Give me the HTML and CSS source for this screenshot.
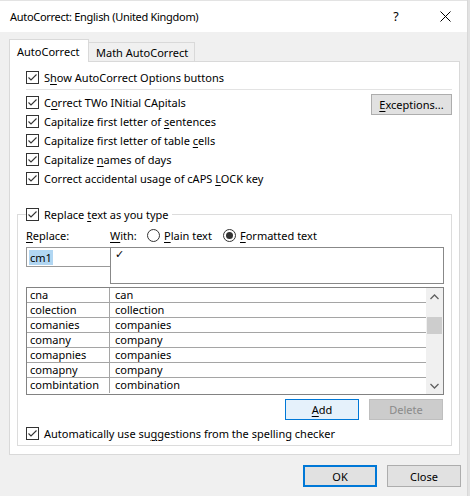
FILE: index.html
```html
<!DOCTYPE html>
<html>
<head>
<meta charset="utf-8">
<title>AutoCorrect</title>
<link rel="stylesheet" href="styles.css">
</head>
<body>
<div class="screen">
  <div class="window">
    <div class="titlebar">
      <span class="title">AutoCorrect: English (United Kingdom)</span>
      <span class="help">?</span>
      <span class="closex"><svg width="11" height="11" viewBox="0 0 11 11"><path d="M0.5 0.5L10.5 10.5M10.5 0.5L0.5 10.5" stroke="#000" stroke-width="1" fill="none"/></svg></span>
    </div>
    <div class="tabs">
      <div class="tab active">AutoCorrect</div>
      <div class="tab">Math AutoCorrect</div>
    </div>
    <div class="panel">
      <div class="row first">
        <svg class="cb" width="13" height="13" viewBox="0 0 13 13"><rect x="0.5" y="0.5" width="12" height="12" fill="#fff" stroke="#333"/><path d="M2.5 6.5L5 9L10.5 3.5" fill="none" stroke="#333" stroke-width="1.1"/></svg>
        <span>S<u>h</u>ow AutoCorrect Options buttons</span>
      </div>
      <div class="sep"></div>
      <div class="caps">
        <div class="caplist">
          <div class="row"><svg class="cb" width="13" height="13" viewBox="0 0 13 13"><rect x="0.5" y="0.5" width="12" height="12" fill="#fff" stroke="#333"/><path d="M2.5 6.5L5 9L10.5 3.5" fill="none" stroke="#333" stroke-width="1.1"/></svg><span>C<u>o</u>rrect TWo INitial CApitals</span></div>
          <div class="row"><svg class="cb" width="13" height="13" viewBox="0 0 13 13"><rect x="0.5" y="0.5" width="12" height="12" fill="#fff" stroke="#333"/><path d="M2.5 6.5L5 9L10.5 3.5" fill="none" stroke="#333" stroke-width="1.1"/></svg><span>Capitalize first letter of <u>s</u>entences</span></div>
          <div class="row"><svg class="cb" width="13" height="13" viewBox="0 0 13 13"><rect x="0.5" y="0.5" width="12" height="12" fill="#fff" stroke="#333"/><path d="M2.5 6.5L5 9L10.5 3.5" fill="none" stroke="#333" stroke-width="1.1"/></svg><span>Capitalize first letter of table <u>c</u>ells</span></div>
          <div class="row"><svg class="cb" width="13" height="13" viewBox="0 0 13 13"><rect x="0.5" y="0.5" width="12" height="12" fill="#fff" stroke="#333"/><path d="M2.5 6.5L5 9L10.5 3.5" fill="none" stroke="#333" stroke-width="1.1"/></svg><span>Capitalize <u>n</u>ames of days</span></div>
          <div class="row"><svg class="cb" width="13" height="13" viewBox="0 0 13 13"><rect x="0.5" y="0.5" width="12" height="12" fill="#fff" stroke="#333"/><path d="M2.5 6.5L5 9L10.5 3.5" fill="none" stroke="#333" stroke-width="1.1"/></svg><span>Correct accidental usage of cAPS <u>L</u>OCK key</span></div>
        </div>
        <div class="btn exceptions"><u>E</u>xceptions...</div>
      </div>
      <div class="group">
        <div class="row legend"><svg class="cb" width="13" height="13" viewBox="0 0 13 13"><rect x="0.5" y="0.5" width="12" height="12" fill="#fff" stroke="#333"/><path d="M2.5 6.5L5 9L10.5 3.5" fill="none" stroke="#333" stroke-width="1.1"/></svg><span>Replace <u>t</u>ext as you type</span></div>
        <div class="labels">
          <span class="lab-replace"><u>R</u>eplace:</span>
          <span class="lab-with"><u>W</u>ith:</span>
          <span class="opt opt1"><span class="radio"></span><span><u>P</u>lain text</span></span>
          <span class="opt"><span class="radio on"></span><span><u>F</u>ormatted text</span></span>
        </div>
        <div class="inputs">
          <div class="replace-box"><span class="sel">cm1</span></div>
          <div class="with-box"><span class="tick">✓</span></div>
        </div>
        <div class="list">
          <div class="rows">
            <div class="lrow"><span class="c1">cna</span><span class="c2">can</span></div>
            <div class="lrow"><span class="c1">colection</span><span class="c2">collection</span></div>
            <div class="lrow"><span class="c1">comanies</span><span class="c2">companies</span></div>
            <div class="lrow"><span class="c1">comany</span><span class="c2">company</span></div>
            <div class="lrow"><span class="c1">comapnies</span><span class="c2">companies</span></div>
            <div class="lrow"><span class="c1">comapny</span><span class="c2">company</span></div>
            <div class="lrow last"><span class="c1">combintation</span><span class="c2">combination</span></div>
          </div>
          <div class="scrollbar">
            <div class="sbtn"><svg width="9" height="6" viewBox="0 0 9 6"><path d="M0.5 5L4.5 1L8.5 5" fill="none" stroke="#606060" stroke-width="1.3"/></svg></div>
            <div class="track"><div class="thumb"></div></div>
            <div class="sbtn"><svg width="9" height="6" viewBox="0 0 9 6"><path d="M0.5 1L4.5 5L8.5 1" fill="none" stroke="#606060" stroke-width="1.3"/></svg></div>
          </div>
        </div>
        <div class="actions">
          <div class="btn add"><u>A</u>dd</div>
          <div class="btn disabled">Delete</div>
        </div>
        <div class="row auto"><svg class="cb" width="13" height="13" viewBox="0 0 13 13"><rect x="0.5" y="0.5" width="12" height="12" fill="#fff" stroke="#333"/><path d="M2.5 6.5L5 9L10.5 3.5" fill="none" stroke="#333" stroke-width="1.1"/></svg><span>Automatically use su<u>g</u>gestions from the spelling checker</span></div>
      </div>
    </div>
    <div class="footer">
      <div class="btn ok">OK</div>
      <div class="btn">Close</div>
    </div>
  </div>
  <div class="strip"></div>
</div>
</body>
</html>
```
FILE: styles.css
```css
* { box-sizing: border-box; }
html, body { margin: 0; padding: 0; }
body {
  width: 470px;
  height: 496px;
  overflow: hidden;
  background: #f0f0f0;
  font-family: "Noto Sans", "Open Sans", sans-serif;
  font-size: 11px;
  line-height: 15px;
  color: #000;
}
u { text-decoration: underline; text-underline-offset: 2px; text-decoration-thickness: 1px; }
.screen { display: flex; height: 496px; }
.window { width: 467px; height: 496px; background: #f0f0f0; }
.strip { width: 3px; height: 496px; background: #e2e2e2; border-left: 1px solid #d8d8d8; }

.titlebar {
  height: 32px;
  background: #fff;
  border-top: 1px solid #e3e3e3;
  display: flex;
  align-items: center;
  padding-left: 10px;
}
.title { font-size: 11px; letter-spacing: -0.3px; flex: 1; white-space: nowrap; }
.help { width: 20px; text-align: center; margin-right: 34px; font-size: 12.5px; }
.closex { width: 11px; height: 11px; display: flex; margin-right: 16px; }

.tabs { height: 29px; display: flex; align-items: flex-end; padding-left: 9px; }
.tab {
  height: 19px;
  padding: 0 7px;
  border: 1px solid #d9d9d9;
  border-bottom: none;
  background: #f0f0f0;
  display: flex;
  align-items: center;
  margin-left: -1px;
  width: 107px;
  white-space: nowrap;
}
.tab.active {
  height: 23px;
  width: 80px;
  margin-left: 0;
  background: #fff;
  margin-bottom: -1px;
  position: relative;
  z-index: 1;
}

.panel {
  margin-left: 9px;
  width: 451px;
  height: 394px;
  background: #fff;
  border: 1px solid #d9d9d9;
  padding-top: 6px;
}
.row { height: 19px; display: flex; align-items: center; gap: 5px; padding-left: 16px; white-space: nowrap; }
.cb { flex: none; }
.sep { height: 1px; background: #e3e3e3; margin: 2px 7px 0 16px; }
.caps { display: flex; justify-content: space-between; align-items: flex-start; margin-top: 3px; }
.btn {
  height: 21px;
  width: 74px;
  background: #e1e1e1;
  border: 1px solid #adadad;
  display: flex;
  align-items: center;
  justify-content: center;
  white-space: nowrap;
}
.exceptions { width: 81px; margin-top: 1px; margin-right: 7px; }

.group {
  margin: 26px 7px 0 7px;
  border: 1px solid #dcdcdc;
  height: 232px;
}
.row.legend {
  padding-left: 0;
  margin-left: 8px;
  margin-top: -10px;
  width: max-content;
  background: #fff;
  padding-right: 3px;
}
.labels { height: 18px; margin-top: 2px; padding-left: 8px; display: flex; align-items: center; white-space: nowrap; }
.lab-replace { width: 84px; }
.lab-with { width: 37px; }
.opt { display: flex; align-items: center; gap: 4px; }
.opt1 { width: 76px; }
.radio {
  width: 13px; height: 13px;
  border: 1px solid #333;
  border-radius: 50%;
  background: #fff;
  display: flex; align-items: center; justify-content: center;
}
.radio.on::after { content: ""; width: 7px; height: 7px; border-radius: 50%; background: #333; }

.inputs { display: flex; margin-top: 3px; padding-left: 8px; }
.replace-box {
  width: 85px; height: 20px;
  border: 1px solid #999;
  padding: 2px 0 0 2px;
}
.sel { background: #b1d6f2; padding: 0 1px; display: inline-block; line-height: 15px; }
.with-box {
  width: 334px; height: 37px;
  margin-left: -1px;
  border: 1px solid #888;
  padding: 1px 0 0 4px;
  background: #fff;
}
.tick { font-family: "DejaVu Sans", sans-serif; font-size: 11px; line-height: 12px; display: block; font-weight: bold; }

.list {
  margin: 3px 0 0 8px;
  width: 418px; height: 108px;
  border: 1px solid #828282;
  display: flex;
}
.rows { flex: 1; }
.lrow { height: 15px; display: flex; border-bottom: 1px solid #a5a5a5; line-height: 14px; }
.lrow.last { border-bottom: none; }
.c1 { width: 83px; border-right: 1px solid #a5a5a5; padding-left: 3px; }
.c2 { padding-left: 5px; }
.scrollbar { width: 17px; background: #f0f0f0; display: flex; flex-direction: column; }
.sbtn { height: 17px; display: flex; align-items: center; justify-content: center; }
.track { flex: 1; }
.thumb { margin-top: 12px; height: 17px; width: 15px; margin-left: 1px; background: #cdcdcd; }

.actions { display: flex; justify-content: flex-end; gap: 10px; margin: 4px 8px 0 0; }
.btn.add { background: #e5f1fb; border-color: #0078d7; }
.btn.disabled { background: #cccccc; border-color: #bfbfbf; color: #8a8a8a; }
.row.auto { margin-top: 4px; padding-left: 8px; }

.footer { display: flex; justify-content: flex-end; gap: 10px; padding: 10px 6px 0 0; }
.footer .btn { height: 22px; }
.btn.ok { border: 2px solid #0078d7; }
```
